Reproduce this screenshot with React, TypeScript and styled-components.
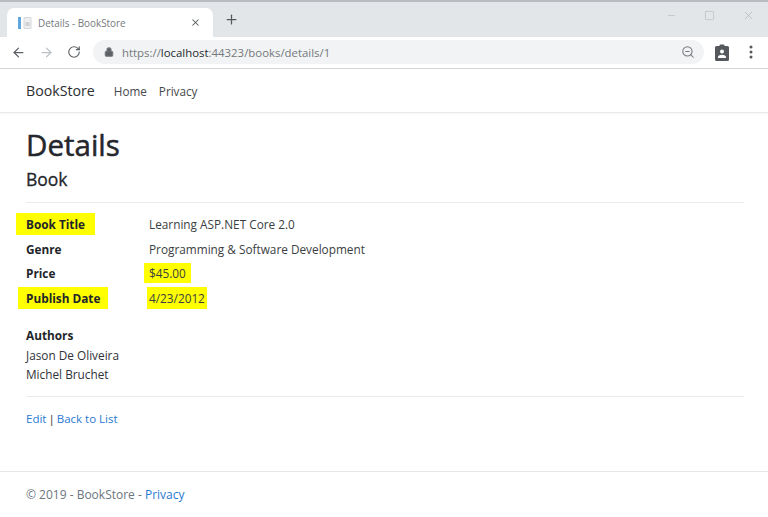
import React from "react";
import styled, { createGlobalStyle } from "styled-components";
import { ArrowLeft, ArrowRight, RotateCw, Lock, ZoomOut, Plus, X, Minus, Square } from "lucide-react";

const GlobalStyle = createGlobalStyle`
  html, body {
    margin: 0;
    padding: 0;
    background: #fff;
    overflow: hidden;
  }
  body {
    font-family: "Open Sans", "Noto Sans", sans-serif;
    color: #212529;
  }
  * { box-sizing: border-box; }
`;

const Page = styled.div`
  width: 768px;
  height: 517px;
  overflow: hidden;
  display: flex;
  flex-direction: column;
`;

const TabStrip = styled.div`
  height: 37px;
  background: #e3e6e9;
  border-top: 2px solid #b9bdc1;
  display: flex;
  align-items: flex-end;
  padding-left: 7px;
`;

const Tab = styled.div`
  width: 206px;
  height: 29px;
  background: #fff;
  border-radius: 7px 7px 0 0;
  display: flex;
  align-items: center;
  padding: 0 12px 0 11px;
  font-size: 9.9px;
  color: #75797d;
`;

const TabTitle = styled.span`
  margin-left: 5px;
  flex: 1;
`;

const NewTab = styled.div`
  margin: 0 0 6px 11px;
  height: 24px;
  display: flex;
  align-items: center;
  color: #54585c;
`;

const WindowControls = styled.div`
  margin-left: auto;
  align-self: flex-start;
  display: flex;
  align-items: center;
  gap: 27px;
  padding: 7px 13px 0 0;
  color: #a2a6aa;
`;

const Toolbar = styled.div`
  height: 32px;
  display: flex;
  align-items: center;
  padding: 0 14px 1px 11px;
  background: #fff;
  border-bottom: 1px solid #d3d5d7;
  color: #5d6165;
`;

const NavButtons = styled.div`
  display: flex;
  gap: 13px;
  align-items: center;
  width: 82px;
`;

const Omnibox = styled.div`
  width: 611px;
  height: 24px;
  border-radius: 12px;
  background: #f1f3f4;
  display: flex;
  align-items: center;
  padding: 0 9px 0 11px;
  font-size: 11.4px;
  color: #75797d;
`;

const Url = styled.span`
  margin-left: 8px;
  flex: 1;
  b {
    font-weight: 400;
    color: #26292c;
  }
`;

const ToolbarIcons = styled.div`
  margin-left: 11px;
  display: flex;
  align-items: center;
  gap: 20px;
`;

const Navbar = styled.nav`
  height: 44px;
  display: flex;
  align-items: center;
  padding-left: 26px;
  border-bottom: 1px solid #e8e9ea;
  box-shadow: 0 1px 2px rgba(0, 0, 0, 0.04);
`;

const Brand = styled.span`
  font-size: 14.2px;
  color: #2b2e31;
  margin-right: 19px;
`;

const NavLink = styled.span`
  font-size: 11.7px;
  color: #45494d;
  margin-right: 12px;
`;

const Main = styled.main`
  padding: 0 24px 0 26px;
  flex: 1;
`;

const Heading = styled.h1`
  font-size: 29.5px;
  line-height: 36px;
  font-weight: 400;
  -webkit-text-stroke: 0.5px #24272b;
  margin: 14px 0 0;
  color: #24272b;
`;

const SubHeading = styled.h4`
  font-size: 17.5px;
  line-height: 24px;
  font-weight: 400;
  -webkit-text-stroke: 0.3px #24272b;
  margin: 4px 0 11px;
  color: #24272b;
`;

const Rule = styled.hr`
  border: 0;
  border-top: 1px solid #e9eaeb;
  margin: 0;
`;

const Details = styled.dl`
  display: grid;
  grid-template-columns: 123px 1fr;
  grid-auto-rows: 24.5px;
  align-items: center;
  margin: 9px 0 0;
  font-size: 11.8px;
`;

const Term = styled.dt`
  font-weight: 700;
  color: #22252a;
`;

const Value = styled.dd`
  margin: 0;
  color: #3a3e42;
`;

const Mark = styled.span<{ $x: number; $y: number }>`
  background: #ffff00;
  padding: ${(p) => p.$y}px ${(p) => p.$x}px;
  margin-left: -${(p) => p.$x}px;
`;

const Authors = styled.div`
  margin-top: 16px;
  font-size: 11.8px;
  line-height: 19.5px;
  color: #2f3337;
  padding-bottom: 11px;
`;

const AuthorsLabel = styled.div`
  font-weight: 700;
  color: #22252a;
`;

const Actions = styled.div`
  margin-top: 13px;
  font-size: 11.5px;
  line-height: 18px;
  word-spacing: -1px;
  color: #2f3337;
`;

const Link = styled.a`
  color: #2a7ad0;
  word-spacing: 0;
`;

const Footer = styled.footer`
  height: 46px;
  border-top: 1px solid #e6e7e8;
  padding: 14px 0 0 26px;
  font-size: 12px;
  line-height: 18px;
  color: #6c757d;
`;

const Favicon = () => (
  <svg width="15" height="14" viewBox="0 0 15 14">
    <rect x="0" y="1" width="3" height="12" fill="#62a6de" />
    <path d="M6 1.5h7v11H6z" fill="#eeeff0" stroke="#d5d7d9" />
    <rect x="7.5" y="6" width="4" height="4" fill="#d0d2d4" />
  </svg>
);

const ClipboardIcon = () => (
  <svg width="14" height="17" viewBox="0 0 14 17">
    <path
      d="M1.5 2H4.5V1.5A1 1 0 0 1 5.5.5h3a1 1 0 0 1 1 1V2h3A1.5 1.5 0 0 1 14 3.5v12a1.5 1.5 0 0 1-1.5 1.5h-11A1.5 1.5 0 0 1 0 15.5v-12A1.5 1.5 0 0 1 1.5 2z"
      fill="#55595d"
    />
    <circle cx="7" cy="7.5" r="2" fill="#fff" />
    <path d="M3 14v-1.3c0-1.3 2.6-2 4-2s4 .7 4 2V14z" fill="#fff" />
  </svg>
);

const MenuDots = () => (
  <svg width="4" height="14" viewBox="0 0 4 14">
    <circle cx="2" cy="2" r="1.5" fill="#55595d" />
    <circle cx="2" cy="7" r="1.5" fill="#55595d" />
    <circle cx="2" cy="12" r="1.5" fill="#55595d" />
  </svg>
);

export default function App() {
  return (
    <Page>
      <GlobalStyle />
      <TabStrip>
        <Tab>
          <Favicon />
          <TabTitle>Details - BookStore</TabTitle>
          <X size={11} strokeWidth={2.2} color="#55595d" />
        </Tab>
        <NewTab>
          <Plus size={15} strokeWidth={2} />
        </NewTab>
        <WindowControls>
          <Minus size={11} strokeWidth={1} />
          <Square size={11} strokeWidth={1} />
          <X size={13} strokeWidth={1} />
        </WindowControls>
      </TabStrip>
      <Toolbar>
        <NavButtons>
          <ArrowLeft size={15} strokeWidth={2} />
          <ArrowRight size={15} strokeWidth={2} color="#bcc0c4" />
          <RotateCw size={14} strokeWidth={2} />
        </NavButtons>
        <Omnibox>
          <Lock size={10} strokeWidth={2.5} fill="#5d6165" />
          <Url>
            https://<b>localhost</b>:44323/books/details/1
          </Url>
          <ZoomOut size={14} strokeWidth={1.8} />
        </Omnibox>
        <ToolbarIcons>
          <ClipboardIcon />
          <MenuDots />
        </ToolbarIcons>
      </Toolbar>
      <Navbar>
        <Brand>BookStore</Brand>
        <NavLink>Home</NavLink>
        <NavLink>Privacy</NavLink>
      </Navbar>
      <Main>
        <Heading>Details</Heading>
        <SubHeading>Book</SubHeading>
        <Rule />
        <Details>
          <Term>
            <Mark $x={10} $y={3}>Book Title</Mark>
          </Term>
          <Value>Learning ASP.NET Core 2.0</Value>
          <Term>Genre</Term>
          <Value>Programming &amp; Software Development</Value>
          <Term>Price</Term>
          <Value>
            <Mark $x={5} $y={2}>$45.00</Mark>
          </Value>
          <Term>
            <Mark $x={8} $y={3}>Publish Date</Mark>
          </Term>
          <Value>
            <Mark $x={2} $y={3}>4/23/2012</Mark>
          </Value>
        </Details>
        <Authors>
          <AuthorsLabel>Authors</AuthorsLabel>
          <div>Jason De Oliveira</div>
          <div>Michel Bruchet</div>
        </Authors>
        <Rule />
        <Actions>
          <Link>Edit</Link> | <Link>Back to List</Link>
        </Actions>
      </Main>
      <Footer>
        © 2019 - BookStore - <Link>Privacy</Link>
      </Footer>
    </Page>
  );
}
